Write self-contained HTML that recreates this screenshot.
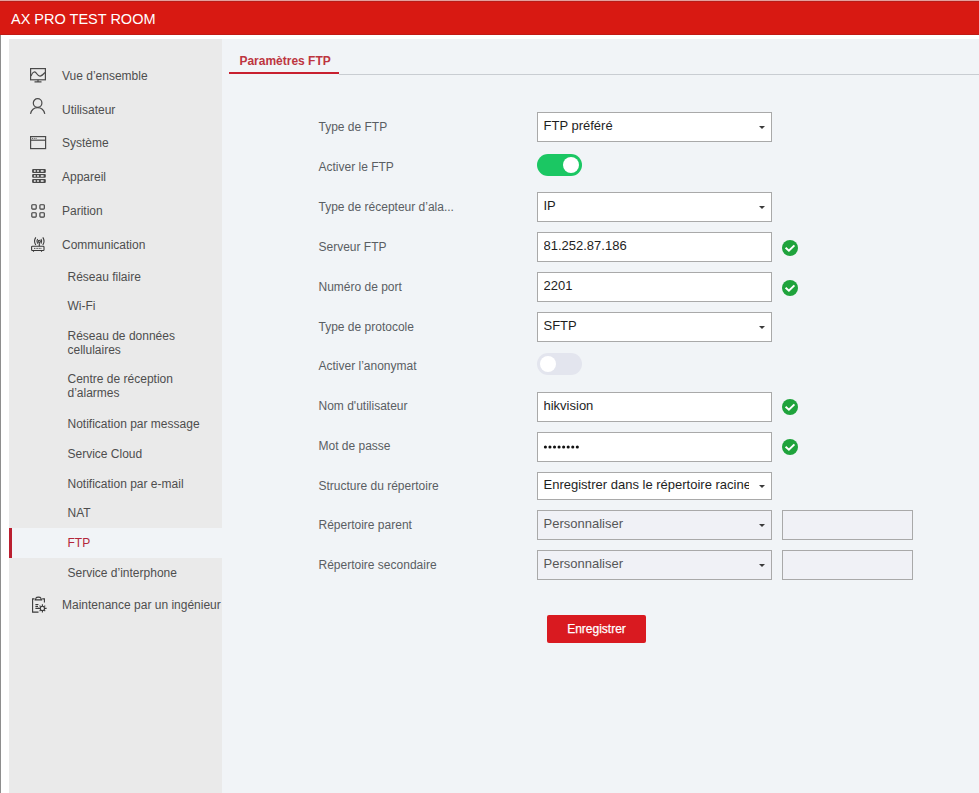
<!DOCTYPE html>
<html><head><meta charset="utf-8">
<style>
*{margin:0;padding:0;box-sizing:border-box}
html,body{width:979px;height:793px;overflow:hidden;background:#f1f4f7;font-family:"Liberation Sans",sans-serif;position:relative}
.abs{position:absolute;white-space:nowrap}
#topline{left:0;top:0;width:979px;height:1px;background:#e4a09c}
#hdr{left:0;top:1px;width:979px;height:34px;background:#d81912;border-top:1px solid #b81d18;border-bottom:1px solid #c21a14}
#title{left:11px;top:12.1px;font-size:14.5px;line-height:14.5px;color:#fff}
#white{left:0;top:35px;width:979px;height:4px;background:#fff}
#lline{left:0;top:35px;width:1px;height:758px;background:#8e8e8e}
#lwhite{left:1px;top:39px;width:8px;height:754px;background:#fff}
#side{left:9px;top:39px;width:213px;height:754px;background:#eaeaea}
.mi{position:absolute;left:62px;font-size:12px;line-height:14px;color:#4e4e4e;white-space:nowrap}
.si{position:absolute;left:67.5px;font-size:12px;line-height:14px;color:#4e4e4e;white-space:nowrap}
.ic{position:absolute;left:28px;width:20px;height:20px}
#act{left:9px;top:528px;width:213px;height:30px;background:#f1f4f7}
#actbar{left:9px;top:528px;width:3px;height:30px;background:#ba1f30}
#tabt{left:239.4px;top:53.8px;font-size:12px;line-height:14px;font-weight:bold;color:#bd3540}
#tabline{left:339px;top:73.5px;width:640px;height:1px;background:#c9cdd2}
#tabred{left:229px;top:72px;width:110px;height:2px;background:#c8202f}
.lb{position:absolute;left:318.5px;font-size:12px;line-height:14px;color:#5a5e63;white-space:nowrap}
.box{position:absolute;left:537px;width:235px;height:30px;border:1px solid #a9a9a9;background:#fff}
.box .t{position:absolute;left:5.5px;top:5px;font-size:13px;line-height:16px;color:#1e1e1e;white-space:nowrap;overflow:hidden;right:22px}
.box.dis{background:#f0f1f6}
.box.dis .t{color:#565656}
.caret{position:absolute;right:6px;top:13px;width:0;height:0;border-left:3px solid transparent;border-right:3px solid transparent;border-top:3px solid #3a3a3a}
.tg{position:absolute;left:537px;width:45px;height:22px;border-radius:11px;background:#1bc763}
.tg .k{position:absolute;top:3px;width:16px;height:16px;border-radius:50%;background:#fff}
.chk{position:absolute;left:782px;width:16px;height:16px}
.inp2{position:absolute;left:782px;width:131px;height:30px;border:1px solid #a9a9a9;background:#f0f1f6}
#btn{left:547px;top:615px;width:99px;height:28px;background:#d91a20;border-radius:2px;color:#fff;font-size:12px;line-height:14px;text-align:center;padding-top:7px;-webkit-text-stroke:0.25px #fff}
</style></head><body>
<div class="abs" id="topline"></div>
<div class="abs" id="hdr"></div>
<div class="abs" id="title">AX PRO TEST ROOM</div>
<div class="abs" id="white"></div>
<div class="abs" id="lwhite"></div>
<div class="abs" id="side"></div>
<div class="abs" id="lline"></div>
<div class="abs" id="act"></div>
<div class="abs" id="actbar"></div>

<!-- sidebar icons -->
<svg class="ic" style="top:65px" viewBox="0 0 20 20" fill="none" stroke="#4a4a4a" stroke-width="1.2">
  <rect x="2.6" y="3.6" width="14.8" height="11.2"/>
  <path d="M3 11 C5 6 7 6 9 9 C11 12 13 12 17 7.5"/>
  <path d="M10 14.8 V16.6 M6.5 16.8 H13.5"/>
</svg>
<svg class="ic" style="top:98px" viewBox="0 0 20 20" fill="none" stroke="#4a4a4a" stroke-width="1.2">
  <circle cx="9.6" cy="5" r="4.3"/>
  <path d="M2.5 15.8 C3.5 11.5 6 9.6 9.6 9.6 C13.2 9.6 15.8 11.5 16.8 15.8"/>
</svg>
<svg class="ic" style="top:132px" viewBox="0 0 20 20" fill="none" stroke="#4a4a4a" stroke-width="1.2">
  <rect x="2.6" y="4.6" width="15" height="12"/>
  <path d="M2.6 8.2 H17.6"/>
  <path d="M4 6.4 H4.9 M5.8 6.4 H6.7 M7.6 6.4 H8.5" stroke-width="1"/>
</svg>
<svg class="ic" style="top:166px" viewBox="0 0 20 20">
  <g fill="#4a4a4a">
  <rect x="4.1" y="3.1" width="13.7" height="3.8" rx="1"/>
  <rect x="4.1" y="8.05" width="13.7" height="3.8" rx="1"/>
  <rect x="4.1" y="13.1" width="13.7" height="3.8" rx="1"/>
  </g>
  <g fill="#eaeaea"><rect x="5.9" y="4.2" width="1.8" height="1.6"/><rect x="9.1" y="4.2" width="1.8" height="1.6"/><rect x="12.8" y="4.2" width="2.8" height="1.6"/><rect x="5.9" y="9.15" width="1.8" height="1.6"/><rect x="9.1" y="9.15" width="1.8" height="1.6"/><rect x="12.8" y="9.15" width="2.8" height="1.6"/><rect x="5.9" y="14.2" width="1.8" height="1.6"/><rect x="9.1" y="14.2" width="1.8" height="1.6"/><rect x="12.8" y="14.2" width="2.8" height="1.6"/></g>
</svg>
<svg class="ic" style="top:200px" viewBox="0 0 20 20" fill="none" stroke="#3e3e3e" stroke-width="1.15">
  <rect x="3.8" y="4.7" width="4.4" height="4.4" rx="0.8"/>
  <rect x="11.9" y="4.7" width="4.4" height="4.4" rx="0.8"/>
  <rect x="3.8" y="12.7" width="4.4" height="4.4" rx="0.8"/>
  <rect x="11.9" y="12.7" width="4.4" height="4.4" rx="0.8"/>
</svg>
<svg class="ic" style="top:234px" viewBox="0 0 20 20" fill="none" stroke="#3a3a3a" stroke-width="1.1">
  <rect x="3.6" y="12.3" width="12.4" height="4.2" rx="0.8"/>
  <path d="M5.5 16.5 V17.8 M13.5 16.5 V17.8"/>
  <path d="M6 14.4 H14" stroke-width="0.9" stroke-dasharray="1 0.6"/>
  <path d="M11.3 8.5 V12.3"/>
  <circle cx="11.3" cy="7.3" r="1.1"/>
  <path d="M9.6 5 C8.6 6.5 8.6 8.2 9.6 9.6 M13 5 C14 6.5 14 8.2 13 9.6"/>
  <path d="M7.8 3.4 C6.2 5.8 6.2 8.6 7.8 11 M14.8 3.4 C16.4 5.8 16.4 8.6 14.8 11"/>
</svg>
<svg class="ic" style="top:595px" viewBox="0 0 20 20" fill="none" stroke="#3a3a3a" stroke-width="1.1">
  <path d="M6.6 3.9 H4.6 V17.1 H10.5"/>
  <path d="M14.2 3.9 H16.4 V7.6"/>
  <path d="M7.3 4.9 L8.2 2.8 C8.6 1.9 12.2 1.9 12.6 2.8 L13.5 4.9 Z"/>
  <path d="M7.4 9.5 H10.4 M7.4 11.4 H10 M7.4 13.4 H11" stroke-width="1.1"/>
  <circle cx="14.4" cy="13.4" r="2.1"/>
  <path d="M14.4 9.2 V11 M14.4 15.8 V17.6 M10.4 13.4 H12.2 M16.6 13.4 H18.6 M11.6 10.6 L12.6 11.6 M16.2 15.2 L17.2 16.2 M17.2 10.6 L16.2 11.6 M12.6 15.2 L11.6 16.2"/>
</svg>

<div class="mi" style="top:69px">Vue d’ensemble</div>
<div class="mi" style="top:102.5px">Utilisateur</div>
<div class="mi" style="top:135.9px">Système</div>
<div class="mi" style="top:169.9px">Appareil</div>
<div class="mi" style="top:204px">Parition</div>
<div class="mi" style="top:238px">Communication</div>
<div class="si" style="top:270px">Réseau filaire</div>
<div class="si" style="top:298.5px">Wi-Fi</div>
<div class="si" style="top:328.8px">Réseau de données<br>cellulaires</div>
<div class="si" style="top:372.4px">Centre de réception<br>d’alarmes</div>
<div class="si" style="top:416.5px">Notification par message</div>
<div class="si" style="top:447px">Service Cloud</div>
<div class="si" style="top:476.5px">Notification par e-mail</div>
<div class="si" style="top:506px">NAT</div>
<div class="si" style="top:535.8px;color:#b3263a">FTP</div>
<div class="si" style="top:565.6px">Service d’interphone</div>
<div class="mi" style="top:597.6px">Maintenance par un ingénieur</div>

<!-- tab -->
<div class="abs" id="tabline"></div>
<div class="abs" id="tabred"></div>
<div class="abs" id="tabt">Paramètres FTP</div>

<!-- form labels -->
<div class="lb" style="top:120px">Type de FTP</div>
<div class="lb" style="top:160px">Activer le FTP</div>
<div class="lb" style="top:200px">Type de récepteur d’ala...</div>
<div class="lb" style="top:240px">Serveur FTP</div>
<div class="lb" style="top:280px">Numéro de port</div>
<div class="lb" style="top:320px">Type de protocole</div>
<div class="lb" style="top:359px">Activer l’anonymat</div>
<div class="lb" style="top:399px">Nom d'utilisateur</div>
<div class="lb" style="top:439px">Mot de passe</div>
<div class="lb" style="top:478.5px">Structure du répertoire</div>
<div class="lb" style="top:518px">Répertoire parent</div>
<div class="lb" style="top:557.8px">Répertoire secondaire</div>

<!-- controls -->
<div class="box" style="top:112px"><div class="t">FTP préféré</div><div class="caret"></div></div>
<div class="tg" style="top:154px"><div class="k" style="left:26px"></div></div>
<div class="box" style="top:192px"><div class="t">IP</div><div class="caret"></div></div>
<div class="box" style="top:232px"><div class="t">81.252.87.186</div></div>
<div class="box" style="top:272px"><div class="t">2201</div></div>
<div class="box" style="top:312px"><div class="t">SFTP</div><div class="caret"></div></div>
<div class="tg" style="top:353px;background:#e3e5ee"><div class="k" style="left:3px"></div></div>
<div class="box" style="top:391.5px"><div class="t">hikvision</div></div>
<div class="box" style="top:431.5px"><svg style="position:absolute;left:0;top:0" width="60" height="28" fill="#111"><circle cx="7.40" cy="14" r="1.55"/><circle cx="11.96" cy="14" r="1.55"/><circle cx="16.52" cy="14" r="1.55"/><circle cx="21.08" cy="14" r="1.55"/><circle cx="25.64" cy="14" r="1.55"/><circle cx="30.20" cy="14" r="1.55"/><circle cx="34.76" cy="14" r="1.55"/><circle cx="39.32" cy="14" r="1.55"/></svg></div>
<div class="box" style="top:471.5px;height:28.5px"><div class="t" style="top:4.5px">Enregistrer dans le répertoire racine</div><div class="caret" style="top:12.5px"></div></div>
<div class="box dis" style="top:510px"><div class="t">Personnaliser</div><div class="caret"></div></div>
<div class="box dis" style="top:550px"><div class="t">Personnaliser</div><div class="caret"></div></div>
<div class="inp2" style="top:510px"></div>
<div class="inp2" style="top:550px"></div>

<svg class="chk" style="top:240px" viewBox="0 0 16 16"><circle cx="8" cy="8" r="8" fill="#1fa33c"/><path d="M3.6 7.8 L6.9 10.7 L12.4 5.4" fill="none" stroke="#fff" stroke-width="2"/></svg>
<svg class="chk" style="top:280px" viewBox="0 0 16 16"><circle cx="8" cy="8" r="8" fill="#1fa33c"/><path d="M3.6 7.8 L6.9 10.7 L12.4 5.4" fill="none" stroke="#fff" stroke-width="2"/></svg>
<svg class="chk" style="top:399px" viewBox="0 0 16 16"><circle cx="8" cy="8" r="8" fill="#1fa33c"/><path d="M3.6 7.8 L6.9 10.7 L12.4 5.4" fill="none" stroke="#fff" stroke-width="2"/></svg>
<svg class="chk" style="top:439px" viewBox="0 0 16 16"><circle cx="8" cy="8" r="8" fill="#1fa33c"/><path d="M3.6 7.8 L6.9 10.7 L12.4 5.4" fill="none" stroke="#fff" stroke-width="2"/></svg>

<div class="abs" id="btn">Enregistrer</div>
</body></html>
